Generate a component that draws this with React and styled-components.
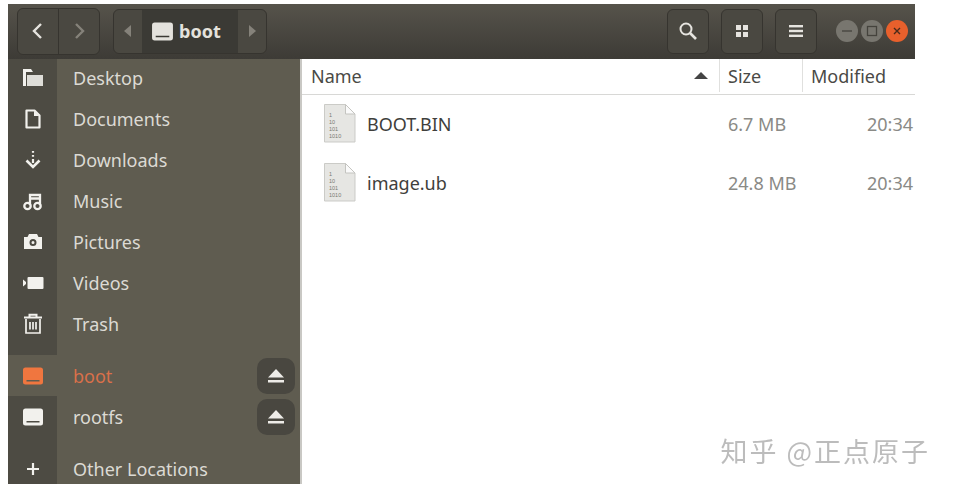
import React from "react";
import styled, { createGlobalStyle } from "styled-components";

const PLACES = [
  { label: "Desktop", icon: "folder" },
  { label: "Documents", icon: "document" },
  { label: "Downloads", icon: "download" },
  { label: "Music", icon: "music" },
  { label: "Pictures", icon: "camera" },
  { label: "Videos", icon: "video" },
  { label: "Trash", icon: "trash" },
];

const FILES = [
  { name: "BOOT.BIN", size: "6.7 MB", modified: "20:34" },
  { name: "image.ub", size: "24.8 MB", modified: "20:34" },
];

const ICONS = {
  folder: (
    <>
      <path d="M1 2h8l2 3H1z" fill="currentColor" />
      <path d="M1 5h3v14H1z" fill="currentColor" />
      <path d="M5 8h16v11H5z" fill="currentColor" opacity="0.88" />
    </>
  ),
  document: (
    <>
      <path
        d="M4.500 2.500h8l5 5v12h-13z"
        fill="none"
        stroke="currentColor"
        strokeWidth="2.200"
        strokeLinejoin="round"
      />
      <path d="M12 3v5h5z" fill="currentColor" />
    </>
  ),
  download: (
    <>
      <path d="M11 2v1.800M11 6v1.800M11 10v4" stroke="currentColor" strokeWidth="2.200" fill="none" />
      <path d="M4.500 11.500L11 18l6.500-6.500" stroke="currentColor" strokeWidth="2.600" fill="none" />
    </>
  ),
  music: (
    <>
      <circle cx="5.500" cy="16" r="3.200" fill="none" stroke="currentColor" strokeWidth="2.300" />
      <circle cx="15.500" cy="16" r="3.200" fill="none" stroke="currentColor" strokeWidth="2.300" />
      <path d="M8 15V5h10v10M8 8.500h10" fill="none" stroke="currentColor" strokeWidth="2.300" />
    </>
  ),
  camera: (
    <path
      fillRule="evenodd"
      fill="currentColor"
      d="M7 3h8l1.500 3H20v12H2V6h3.500zM11 8a3.500 3.500 0 1 0 0 7a3.500 3.500 0 0 0 0-7zM11 10a1.500 1.500 0 1 1 0 3a1.500 1.500 0 0 1 0-3z"
    />
  ),
  video: (
    <>
      <path d="M1 7.500l3 2.500v2l-3 2.500z" fill="currentColor" />
      <rect x="5.500" y="5" width="16" height="12" rx="1" fill="currentColor" />
    </>
  ),
  trash: (
    <>
      <path d="M2 4.500h18M7.500 4V1.800h7V4" fill="none" stroke="currentColor" strokeWidth="2" />
      <path
        d="M4 6v14h14V6M8 9v7.500M11 9v7.500M14 9v7.500"
        fill="none"
        stroke="currentColor"
        strokeWidth="1.700"
      />
    </>
  ),
  drive: (
    <path
      fillRule="evenodd"
      fill="currentColor"
      d="M3.500 2.500h15A2.500 2.500 0 0 1 21 5v12a2.500 2.500 0 0 1-2.500 2.500h-15A2.500 2.500 0 0 1 1 17V5a2.500 2.500 0 0 1 2.500-2.500zM4.500 15v1.500h13V15z"
    />
  ),
  plus: <path d="M11 5v12M5 11h12" stroke="currentColor" strokeWidth="2.200" fill="none" />,
};

const Glyph = ({ name, size = 22 }) => (
  <svg width={size} height={size} viewBox="0 0 22 22">
    {ICONS[name]}
  </svg>
);

const EjectIcon = () => (
  <svg width="18" height="16" viewBox="0 0 18 16" fill="#eeece8">
    <path d="M9 1l8 8.500H1z" />
    <rect x="1" y="12" width="16" height="2.500" />
  </svg>
);

const FileIcon = () => (
  <svg width="32" height="39" viewBox="0 0 32 39">
    <path d="M.5.500h21l9.500 9.500v28H.5z" fill="#e6e6e3" stroke="#cbcbc7" />
    <path d="M21.500.500V10H31z" fill="#fafafa" stroke="#c4c4c0" />
    <text x="5" y="13" fontSize="5.500" fill="#7a7a72" fontFamily="Liberation Sans, sans-serif">1</text>
    <text x="5" y="20" fontSize="5.500" fill="#7a7a72" fontFamily="Liberation Sans, sans-serif">10</text>
    <text x="5" y="27" fontSize="5.500" fill="#7a7a72" fontFamily="Liberation Sans, sans-serif">101</text>
    <text x="5" y="34" fontSize="5.500" fill="#7a7a72" fontFamily="Liberation Sans, sans-serif">1010</text>
  </svg>
);

const App = () => {
  return (
    <>
      <GlobalStyle />
      <Page>
        <Window>
          <Header>
            <ButtonGroup>
              <NavButton>
                <svg width="16" height="18" viewBox="0 0 16 18">
                  <path d="M11 2L4 9l7 7" fill="none" stroke="#e6e4df" strokeWidth="2.400" />
                </svg>
              </NavButton>
              <NavButton $disabled>
                <svg width="16" height="18" viewBox="0 0 16 18">
                  <path d="M5 2l7 7-7 7" fill="none" stroke="#85827a" strokeWidth="2.400" />
                </svg>
              </NavButton>
            </ButtonGroup>
            <PathBar>
              <PathArrow>
                <svg width="8" height="12" viewBox="0 0 8 12">
                  <path d="M7 0v12L0 6z" fill="#85827a" />
                </svg>
              </PathArrow>
              <PathCurrent>
                <Glyph name="drive" size={23} />
                <span>boot</span>
              </PathCurrent>
              <PathArrow>
                <svg width="8" height="12" viewBox="0 0 8 12">
                  <path d="M1 0v12l7-6z" fill="#85827a" />
                </svg>
              </PathArrow>
            </PathBar>
            <Actions>
              <ToolButton>
                <svg width="20" height="20" viewBox="0 0 20 20">
                  <circle cx="8" cy="8" r="5.500" fill="none" stroke="#e6e4df" strokeWidth="2" />
                  <path d="M12 12l6 6" stroke="#e6e4df" strokeWidth="2.600" />
                </svg>
              </ToolButton>
              <ToolButton>
                <svg width="16" height="16" viewBox="0 0 16 16" fill="#e6e4df">
                  <rect x="2" y="2" width="5" height="5" />
                  <rect x="9" y="2" width="5" height="5" />
                  <rect x="2" y="9" width="5" height="5" />
                  <rect x="9" y="9" width="5" height="5" />
                </svg>
              </ToolButton>
              <ToolButton>
                <svg width="16" height="16" viewBox="0 0 16 16" fill="#e6e4df">
                  <rect x="1" y="2" width="14" height="2.400" />
                  <rect x="1" y="6.800" width="14" height="2.400" />
                  <rect x="1" y="11.600" width="14" height="2.400" />
                </svg>
              </ToolButton>
            </Actions>
            <WindowControls>
              <WindowButton>
                <svg width="12" height="12" viewBox="0 0 12 12">
                  <path d="M1 6h10" stroke="#45433d" strokeWidth="1.300" />
                </svg>
              </WindowButton>
              <WindowButton>
                <svg width="12" height="12" viewBox="0 0 12 12">
                  <rect x="1.500" y="1.500" width="9" height="9" fill="none" stroke="#45433d" strokeWidth="1.300" />
                </svg>
              </WindowButton>
              <WindowButton $close>
                <svg width="10" height="10" viewBox="0 0 10 10">
                  <path d="M2 2l6 6M8 2l-6 6" stroke="#4a2a1a" strokeWidth="1.400" />
                </svg>
              </WindowButton>
            </WindowControls>
          </Header>
          <Body>
            <Sidebar>
              {PLACES.map((place) => (
                <PlaceRow key={place.label}>
                  <IconCell>
                    <Glyph name={place.icon} />
                  </IconCell>
                  <PlaceLabel>{place.label}</PlaceLabel>
                </PlaceRow>
              ))}
              <MountedList>
                <PlaceRow>
                  <IconCell $active>
                    <Glyph name="drive" />
                  </IconCell>
                  <PlaceLabel $active>boot</PlaceLabel>
                  <EjectButton>
                    <EjectIcon />
                  </EjectButton>
                </PlaceRow>
                <PlaceRow>
                  <IconCell>
                    <Glyph name="drive" />
                  </IconCell>
                  <PlaceLabel>rootfs</PlaceLabel>
                  <EjectButton>
                    <EjectIcon />
                  </EjectButton>
                </PlaceRow>
              </MountedList>
              <PlaceRow>
                <IconCell>
                  <Glyph name="plus" />
                </IconCell>
                <PlaceLabel>Other Locations</PlaceLabel>
              </PlaceRow>
            </Sidebar>
            <Main>
              <Columns>
                <NameColumn>
                  <span>Name</span>
                  <svg width="14" height="8" viewBox="0 0 14 8">
                    <path d="M7 0l7 7H0z" fill="#444" />
                  </svg>
                </NameColumn>
                <SizeColumn>Size</SizeColumn>
                <ModifiedColumn>Modified</ModifiedColumn>
              </Columns>
              {FILES.map((file) => (
                <FileRow key={file.name}>
                  <FileName>
                    <FileIcon />
                    <span>{file.name}</span>
                  </FileName>
                  <FileSize>{file.size}</FileSize>
                  <FileTime>{file.modified}</FileTime>
                </FileRow>
              ))}
            </Main>
          </Body>
        </Window>
        <Watermark>知乎 @正点原子</Watermark>
      </Page>
    </>
  );
};

const GlobalStyle = createGlobalStyle`
  html, body {
    margin: 0;
    height: 100%;
    background: #ffffff;
    overflow: hidden;
  }
  body {
    font-family: "Noto Sans", "Open Sans", sans-serif;
    font-size: 18px;
  }
`;

const Page = styled.div`
  position: relative;
  width: 953px;
  height: 489px;
  padding: 4px 38px 5px 8px;
  box-sizing: border-box;
  filter: blur(0.4px);
`;

const Window = styled.div`
  display: flex;
  flex-direction: column;
  height: 480px;
  overflow: hidden;
`;

const Header = styled.header`
  display: flex;
  align-items: center;
  flex: 0 0 55px;
  padding: 0 0 1px 9px;
  box-sizing: border-box;
  background: linear-gradient(#56534b, #3d3b36);
`;

const ButtonGroup = styled.div`
  display: flex;
  height: 45px;
  border: 1px solid #36342f;
  border-radius: 6px;
  background: #4a4841;
  overflow: hidden;
`;

const NavButton = styled.div`
  display: flex;
  align-items: center;
  justify-content: center;
  width: 40px;
  border-left: ${(p) => (p.$disabled ? "1px solid #36342f" : "none")};
`;

const PathBar = styled(ButtonGroup)`
  margin-left: 13px;
  width: 154px;
  box-sizing: border-box;
`;

const PathArrow = styled.div`
  display: flex;
  align-items: center;
  justify-content: center;
  flex: 0 0 28px;
`;

const PathCurrent = styled.div`
  display: flex;
  align-items: center;
  gap: 5px;
  flex: 1;
  padding-left: 9px;
  background: #3b3a35;
  color: #e4e2dd;
  font-weight: 700;
  font-size: 18px;
`;

const Actions = styled.div`
  display: flex;
  gap: 12px;
  margin-left: auto;
`;

const ToolButton = styled.div`
  display: flex;
  align-items: center;
  justify-content: center;
  width: 42px;
  height: 45px;
  box-sizing: border-box;
  border: 1px solid #36342f;
  border-radius: 6px;
  background: #4a4841;
`;

const WindowControls = styled.div`
  display: flex;
  align-items: center;
  gap: 3px;
  margin: 0 7px 0 19px;
`;

const WindowButton = styled.div`
  display: flex;
  align-items: center;
  justify-content: center;
  width: 22px;
  height: 22px;
  border-radius: 50%;
  background: ${(p) => (p.$close ? "#e8602c" : "#78766f")};
`;

const Body = styled.div`
  display: flex;
  flex: 1;
  min-height: 0;
`;

const Sidebar = styled.nav`
  flex: 0 0 294px;
  box-sizing: border-box;
  border-right: 2px solid #c9c8c4;
  background: linear-gradient(to right, #4d4b43 49px, #5f5c50 49px);
  color: #dcdad4;
`;

const PlaceRow = styled.div`
  display: flex;
  align-items: center;
  height: 41px;

  &:first-child {
    height: 39px;
    padding-bottom: 2px;
    box-sizing: border-box;
  }
`;

const IconCell = styled.div`
  display: flex;
  align-items: center;
  justify-content: center;
  flex: 0 0 49px;
  height: 100%;
  color: ${(p) => (p.$active ? "#f0763f" : "#f2f1ed")};
  background: ${(p) => (p.$active ? "#5f5c50" : "transparent")};
`;

const PlaceLabel = styled.span`
  padding-left: 16px;
  color: ${(p) => (p.$active ? "#d9704a" : "#dcdad4")};
`;

const MountedList = styled.div`
  margin: 11px 0;

  ${PlaceRow}:first-child {
    height: 41px;
    padding-bottom: 0;
  }
`;

const EjectButton = styled.div`
  display: flex;
  align-items: center;
  justify-content: center;
  width: 38px;
  height: 36px;
  margin-left: auto;
  margin-right: 5px;
  border-radius: 10px;
  background: #494740;
`;

const Main = styled.main`
  flex: 1;
  min-width: 0;
  background: #ffffff;
  color: #4a4a46;
`;

const Columns = styled.div`
  display: grid;
  grid-template-columns: 418px 83px 1fr;
  height: 36px;
  padding-bottom: 2px;
  border-bottom: 1px solid #d8d8d6;
  box-sizing: border-box;
`;

const NameColumn = styled.div`
  display: flex;
  align-items: center;
  justify-content: space-between;
  padding: 0 11px 0 9px;
  border-right: 1px solid #e0e0de;
`;

const SizeColumn = styled.div`
  display: flex;
  align-items: center;
  padding-left: 8px;
  border-right: 1px solid #e0e0de;
`;

const ModifiedColumn = styled.div`
  display: flex;
  align-items: center;
  padding-left: 8px;
  white-space: nowrap;
`;

const FileRow = styled.div`
  display: grid;
  grid-template-columns: 418px 83px 1fr;
  align-items: center;
  height: 59px;
  padding-bottom: 2px;
  box-sizing: border-box;
`;

const FileName = styled.div`
  display: flex;
  align-items: center;
  gap: 11px;
  padding-left: 22px;
  color: #3f3f3c;
`;

const FileSize = styled.div`
  padding-left: 8px;
  color: #8a8a86;
`;

const FileTime = styled.div`
  padding-right: 2px;
  text-align: right;
  color: #8a8a86;
`;

const Watermark = styled.div`
  position: absolute;
  right: 23px;
  top: 431px;
  font-family: "Noto Sans CJK SC", sans-serif;
  font-size: 27px;
  letter-spacing: 2px;
  color: #bcbcbc;
  white-space: nowrap;
`;

export default App;
